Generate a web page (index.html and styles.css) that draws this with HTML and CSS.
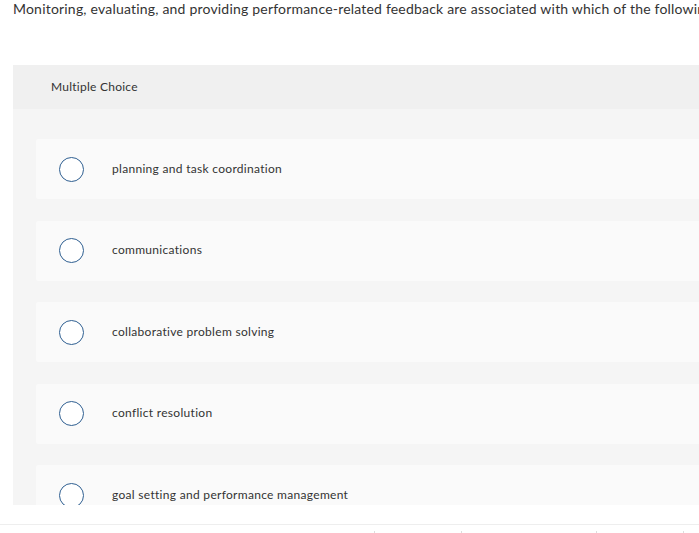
FILE: index.html
```html
<!DOCTYPE html>
<html lang="en">
<head>
    <meta charset="UTF-8">
    <title>Question</title>
    <link rel="stylesheet" href="styles.css">
</head>
<body>
    <p class="stem">Monitoring, evaluating, and providing performance-related feedback are associated with which of the following teamwork competencies?</p>

    <div class="panel">
        <div class="panel-head">Multiple Choice</div>
        <div class="options">
            <div class="option"><span class="radio"></span><span class="label">planning and task coordination</span></div>
            <div class="option"><span class="radio"></span><span class="label">communications</span></div>
            <div class="option"><span class="radio"></span><span class="label">collaborative problem solving</span></div>
            <div class="option"><span class="radio"></span><span class="label">conflict resolution</span></div>
            <div class="option"><span class="radio"></span><span class="label">goal setting and performance management</span></div>
        </div>
    </div>

    <footer class="page-foot">
        <span class="foot-col wide"></span>
        <span class="foot-col wider"></span>
        <span class="foot-col wide"></span>
        <span class="foot-col"></span>
    </footer>
</body>
</html>
```

FILE: styles.css
```css
body {
    margin: 0;
    background: #fff;
    font-family: Lato, "Open Sans", Arial, sans-serif;
    color: #333;
    overflow: hidden;
}

.stem {
    margin: 0;
    padding: 0 13px 1px;
    font-size: 14px;
    line-height: 18px;
    letter-spacing: 0.2px;
    white-space: nowrap;
    overflow: hidden;
}

/* question panel, cut off at the bottom */
.panel {
    margin: 46px 0 0 13px;
    height: 440px;
    overflow: hidden;
}

.panel-head {
    height: 44px;
    line-height: 43px;
    padding-left: 38px;
    background: #f0f0f0;
    font-size: 12px;
    letter-spacing: 0.25px;
}

.options {
    display: flex;
    flex-direction: column;
    gap: 21.5px;
    padding: 30px 0 40px 23px;
    background: #f5f5f5;
}

.option {
    display: flex;
    align-items: center;
    height: 60px;
    padding-left: 23px;
    background: #fafafa;
    border-radius: 2px 0 0 2px;
}

.radio {
    box-sizing: border-box;
    width: 25px;
    height: 25px;
    border: 1.5px solid #2f5f91;
    border-radius: 50%;
    background: #fff;
    flex-shrink: 0;
}

.label {
    margin: 0 0 2px 28px;
    font-size: 12px;
    letter-spacing: 0.3px;
}

.page-foot {
    display: flex;
    margin-top: 19px;
    padding: 6px 0 0 374px;
    border-top: 1px solid #eee;
}

.foot-col {
    width: 15px;
    height: 12px;
    border-left: 1px solid #ddd;
}

.foot-col.wide {
    width: 86px;
}

.foot-col.wider {
    width: 135px;
}
```
